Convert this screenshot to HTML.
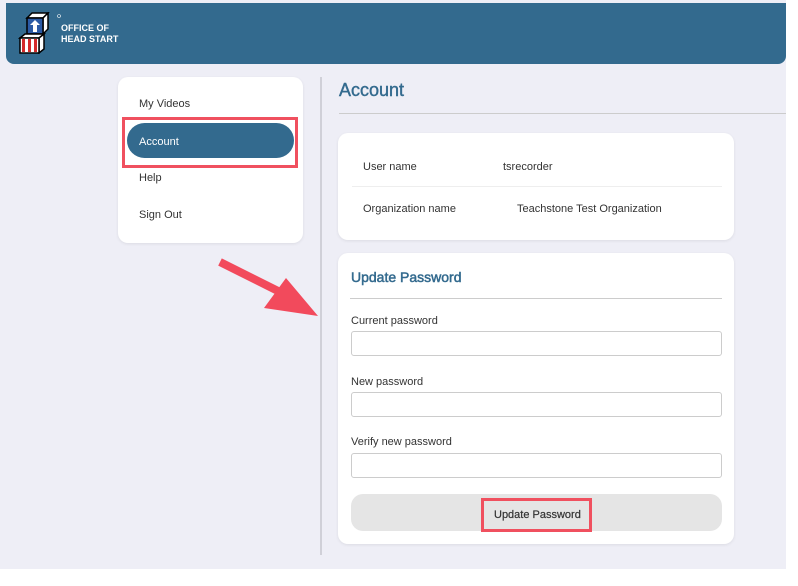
<!DOCTYPE html>
<html><head><style>
*{margin:0;padding:0;box-sizing:border-box}
body{width:798px;height:586px;background:#fff;font-family:"Liberation Sans",sans-serif;position:relative;overflow:hidden;color:#333}
.bg{position:absolute;left:0;top:0;width:786px;height:569px;background:#eeeef6}
.hdr{position:absolute;left:6px;top:3px;width:780px;height:61px;background:#336a8e;border-radius:0 0 8px 8px}
.abs{position:absolute}
.card{position:absolute;background:#fff;border-radius:10px;box-shadow:0 1px 3px rgba(0,0,0,.08)}
.t{position:absolute;font-size:11px;color:#333;white-space:nowrap}
.inp{position:absolute;left:351px;width:371px;height:25px;border:1px solid #ccc;border-radius:3px;background:#fff}
</style></head><body>
<div class="bg"></div>
<div class="hdr"></div>
<svg class="abs" style="left:18px;top:12px" width="45" height="42" viewBox="0 0 45 42">
<polygon points="9,6 14,1 30,1 25,6" fill="#fff" stroke="#000" stroke-width="1.5"/>
<polygon points="25,6 30,1 30,17 25,22" fill="#fff" stroke="#000" stroke-width="1.5"/>
<rect x="9" y="6" width="16" height="16" fill="#2b5aa5" stroke="#000" stroke-width="1.5"/>
<path d="M17 8 L22 13 L19 13 L19 20 L15 20 L15 13 L12 13Z" fill="#fff"/>
<polygon points="2,26 7,22 26,22 21,26" fill="#fff" stroke="#000" stroke-width="1.5"/>
<polygon points="21,26 26,22 26,37 21,41" fill="#fff" stroke="#000" stroke-width="1.5"/>
<rect x="2" y="26" width="19" height="15" fill="#fff" stroke="#000" stroke-width="1.5"/>
<rect x="4" y="27" width="3" height="13" fill="#d42a2a"/><rect x="10" y="27" width="3" height="13" fill="#d42a2a"/><rect x="16" y="27" width="3" height="13" fill="#d42a2a"/>
<circle cx="41" cy="4" r="1.5" fill="none" stroke="#fff" stroke-width=".6"/>
</svg>
<div class="t" style="left:61px;top:23px;color:#fff;font-weight:bold;font-size:9px;line-height:11px">OFFICE OF<br>HEAD START</div>

<div class="card" style="left:118px;top:77px;width:185px;height:166px"></div>
<div class="t" style="left:139px;top:98px">My Videos</div>
<div class="abs" style="left:122px;top:117px;width:176px;height:51px;border:3px solid #f0505f"></div>
<div class="abs" style="left:127px;top:123px;width:167px;height:35px;background:#336a8e;border-radius:18px"></div>
<div class="t" style="left:139px;top:136px;color:#fff">Account</div>
<div class="t" style="left:139px;top:172px">Help</div>
<div class="t" style="left:139px;top:209px">Sign Out</div>

<svg class="abs" style="left:210px;top:250px" width="115" height="75">
<line x1="10" y1="12" x2="70" y2="42" stroke="#f24a5c" stroke-width="8"/>
<polygon points="108,66 54,58 76,28" fill="#f24a5c"/>
</svg>

<div class="abs" style="left:320px;top:77px;width:2px;height:478px;background:#d0d0d8"></div>
<div class="t" style="left:339px;top:80px;font-size:18px;color:#336a8e;-webkit-text-stroke:.4px #336a8e">Account</div>
<div class="abs" style="left:339px;top:113px;width:447px;height:1px;background:#ccc"></div>

<div class="card" style="left:338px;top:133px;width:396px;height:107px"></div>
<div class="t" style="left:363px;top:161px">User name</div>
<div class="t" style="left:503px;top:161px">tsrecorder</div>
<div class="abs" style="left:352px;top:186px;width:370px;height:1px;background:#eee"></div>
<div class="t" style="left:363px;top:203px">Organization name</div>
<div class="t" style="left:517px;top:203px">Teachstone Test Organization</div>

<div class="card" style="left:338px;top:253px;width:396px;height:291px"></div>
<div class="t" style="left:351px;top:269px;font-size:14px;color:#336a8e;-webkit-text-stroke:.5px #336a8e">Update Password</div>
<div class="abs" style="left:350px;top:298px;width:372px;height:1px;background:#ccc"></div>
<div class="t" style="left:351px;top:315px">Current password</div>
<div class="inp" style="top:331px"></div>
<div class="t" style="left:351px;top:376px">New password</div>
<div class="inp" style="top:392px"></div>
<div class="t" style="left:351px;top:436px">Verify new password</div>
<div class="inp" style="top:453px"></div>
<div class="abs" style="left:351px;top:494px;width:371px;height:37px;background:#e5e5e5;border-radius:12px"></div>
<div class="abs" style="left:481px;top:498px;width:111px;height:34px;border:3px solid #f0505f"></div>
<div class="t" style="left:494px;top:509px;-webkit-text-stroke:.2px #333">Update Password</div>
</body></html>
